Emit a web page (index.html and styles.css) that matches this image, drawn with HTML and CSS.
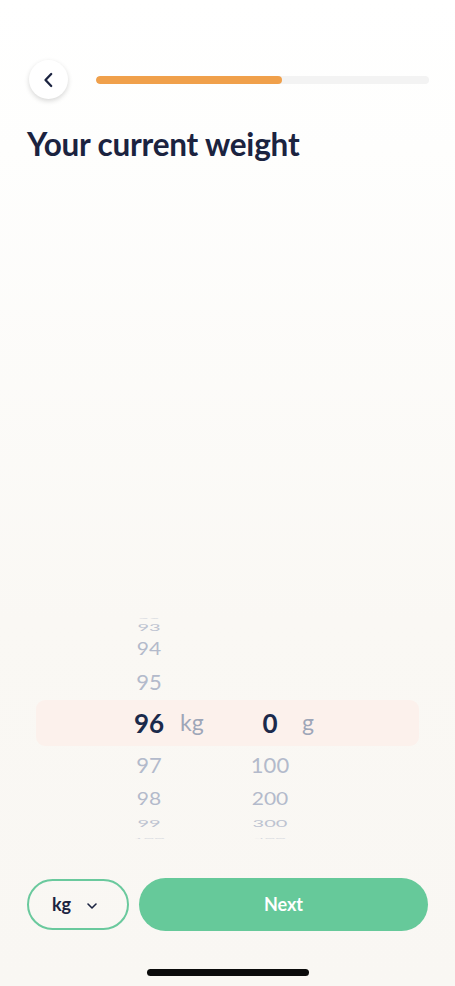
FILE: index.html
```html
<!DOCTYPE html>
<html>
<head>
<meta charset="utf-8">
<link rel="stylesheet" href="styles.css">
</head>
<body>
<div class="screen">
  <div class="header">
    <button class="back" aria-label="Back">
      <svg width="14" height="16" viewBox="0 0 14 16"><path d="M9.2 2 L3.5 8 L9.2 14" fill="none" stroke="#1b2340" stroke-width="2.3" stroke-linecap="round" stroke-linejoin="round"/></svg>
    </button>
    <div class="progress"><div class="progress-fill"></div></div>
  </div>
  <h1 class="title">Your current weight</h1>

  <div class="picker">
    <div class="row r0 top"><span class="n1">92</span><span></span><span class="n2"></span></div>
    <div class="row r1 top"><span class="n1">93</span><span></span><span class="n2"></span></div>
    <div class="row r2 top"><span class="n1">94</span><span></span><span class="n2"></span></div>
    <div class="row r3 top"><span class="n1">95</span><span></span><span class="n2"></span></div>
    <div class="row sel"><span class="n1">96</span><span class="u1">kg</span><span class="n2">0</span><span class="u2">g</span></div>
    <div class="row r3 bot"><span class="n1">97</span><span></span><span class="n2">100</span></div>
    <div class="row r2 bot"><span class="n1">98</span><span></span><span class="n2">200</span></div>
    <div class="row r1 bot"><span class="n1">99</span><span></span><span class="n2">300</span></div>
    <div class="row r0 bot"><span class="n1">100</span><span></span><span class="n2">400</span></div>
  </div>

  <div class="actions">
    <button class="unit-btn">kg
      <svg width="12" height="8" viewBox="0 0 12 8"><path d="M2 2 L6 6 L10 2" fill="none" stroke="#1b2340" stroke-width="1.6" stroke-linecap="round" stroke-linejoin="round"/></svg>
    </button>
    <button class="next-btn">Next</button>
  </div>
  <div class="home"></div>
</div>
</body>
</html>
```
FILE: styles.css
```css
* { box-sizing: border-box; }
html, body { margin: 0; padding: 0; }
body {
  font-family: Lato, "Noto Sans", sans-serif;
  background: linear-gradient(180deg, #ffffff 0px, #fefefd 150px, #faf8f4 620px, #f9f7f3 986px);
}
.screen {
  height: 986px;
  display: flex;
  flex-direction: column;
}
.header {
  margin-top: 60px;
  padding: 0 26px 0 29px;
  display: flex;
  align-items: center;
  gap: 28px;
}
.back {
  width: 39px;
  height: 39px;
  border-radius: 50%;
  border: none;
  background: #ffffff;
  box-shadow: 0 2px 5px rgba(0, 0, 0, 0.16);
  display: flex;
  align-items: center;
  justify-content: center;
  padding: 0;
  flex: none;
}
.progress {
  flex: 1;
  height: 8px;
  border-radius: 4px;
  background: #f3f3f3;
  overflow: hidden;
}
.progress-fill {
  width: 56%;
  height: 100%;
  border-radius: 4px;
  background: #f0a04b;
}
.title {
  margin: 25px 0 0 27px;
  font-size: 31.5px;
  font-weight: 700;
  color: #1b2340;
  letter-spacing: -0.2px;
  line-height: 40px;
}
.picker {
  margin-top: auto;
  display: flex;
  flex-direction: column;
}
.row {
  display: grid;
  grid-template-columns: 119px 60px 61px 60px 1fr;
  align-items: center;
  color: #b3bacb;
  font-size: 22px;
  line-height: 1;
}
.row > span:first-child { grid-column: 2; }
.n1, .n2 { text-align: center; }
.row span { display: block; }
.r0 { height: 8px; }
.r1 { height: 16px; }
.r2 { height: 30px; }
.r3 { height: 37px; }
.r0 span { transform: scaleY(0.12); opacity: 0.5; font-size: 18px; }
.r1 span { transform: scaleY(0.5); opacity: 0.85; font-size: 20px; }
.r2 span { transform: scaleY(0.8); font-size: 21px; }
.r3 span { transform: scaleY(0.95); }
.sel {
  height: 46px;
  margin: 0 36px;
  border-radius: 9px;
  background: #fcf1ec;
  grid-template-columns: 83px 60px 61px 60px 1fr;
}
.sel .n1, .sel .n2 {
  color: #1b2a4b;
  font-weight: 700;
  font-size: 26px;
}
.sel .u1, .sel .u2 {
  color: #9ea6b8;
  font-size: 23px;
  padding-bottom: 2px;
}
.sel .u1 { padding-left: 1px; }
.sel .u2 { padding-left: 2px; }
.actions {
  margin-top: 41px;
  padding: 0 27px;
  display: flex;
  gap: 10px;
  align-items: center;
}
.unit-btn {
  width: 102px;
  height: 51px;
  border-radius: 26px;
  border: 2px solid #6ac99d;
  background: transparent;
  font-family: Lato, "Noto Sans", sans-serif;
  font-size: 18px;
  font-weight: 700;
  color: #1b2340;
  display: flex;
  align-items: center;
  justify-content: center;
  gap: 15px;
  padding: 0 6px 2px 0;
}
.unit-btn svg { margin-top: 5px; }
.next-btn {
  flex: 1;
  height: 53px;
  border-radius: 27px;
  border: none;
  background: #66c99a;
  color: #ffffff;
  font-family: Lato, "Noto Sans", sans-serif;
  font-size: 18px;
  font-weight: 700;
  padding: 0 0 2px 0;
}
.home {
  margin: 38px auto 10px;
  width: 162px;
  height: 7px;
  border-radius: 4px;
  background: #0b0b0b;
}
```
